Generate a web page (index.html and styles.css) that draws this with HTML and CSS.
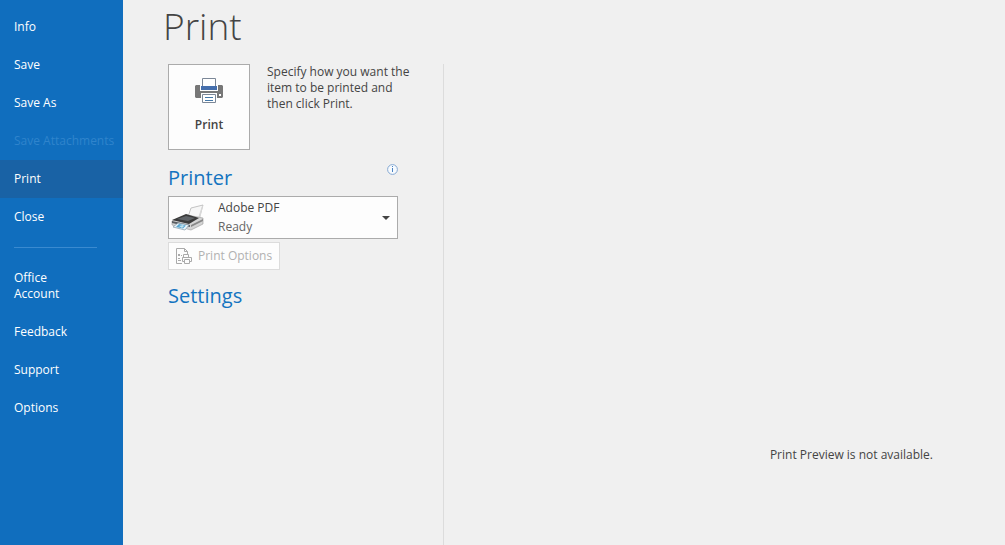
FILE: index.html
```
<!DOCTYPE html>
<html lang="en">
<head>
    <meta charset="UTF-8">
    <meta name="viewport" content="width=device-width, initial-scale=1.0">
    <title>Print</title>
    <link rel="stylesheet" href="styles.css">
</head>
<body>
    <nav class="sidebar">
        <a class="nav-item" href="#info">Info</a>
        <a class="nav-item" href="#save">Save</a>
        <a class="nav-item" href="#save-as">Save As</a>
        <a class="nav-item disabled" aria-disabled="true">Save Attachments</a>
        <a class="nav-item active" href="#print" aria-current="page">Print</a>
        <a class="nav-item" href="#close">Close</a>
        <hr class="nav-divider">
        <a class="nav-item" href="#account">Office<br>Account</a>
        <a class="nav-item" href="#feedback">Feedback</a>
        <a class="nav-item" href="#support">Support</a>
        <a class="nav-item" href="#options">Options</a>
    </nav>

    <main class="content">
        <h1>Print</h1>
        <div class="columns">
            <section class="settings">
                <div class="print-row">
                    <button class="print-button" type="button">
                        <svg width="28" height="26" viewBox="0 0 28 26" aria-hidden="true">
                            <path fill="#777" d="M1 7h26l1 1v11l-1 1H1l-1-1V8z"/>
                            <path fill="#fdfdfd" d="M5 6h18v7H5zM6 15h16v5H6z"/>
                            <path fill="#fff" stroke="#7b8797" d="M7.5 8V.5h13V8"/>
                            <path fill="#456fad" d="M6 8h16v4H6z"/>
                            <path fill="#fff" stroke="#7b8797" d="M7.5 16.500h13v8h-13z"/>
                            <path fill="#4478a8" d="M10 19h8v1h-8zM10 22h8v1h-8z"/>
                            <path fill="#fff" d="M24 16h2v2h-2z"/>
                        </svg>
                        Print
                    </button>
                    <p class="hint">Specify how you want the item to be printed and then click Print.</p>
                </div>

                <div class="section-head">
                    <h2><label for="printer">Printer</label></h2>
                    <svg class="info" width="11" height="11" viewBox="0 0 11 11" role="img" aria-label="Printer information">
                        <circle cx="5.5" cy="5.5" r="4.9" fill="#f7fafd" stroke="#86a9d3"/>
                        <path fill="#4a83c4" d="M5 2h1v1H5zM5 4h1v4H5z"/>
                    </svg>
                </div>
                <div class="printer-picker">
                    <select id="printer">
                        <option>Adobe PDF</option>
                    </select>
                    <svg class="printer-icon" width="34" height="28" viewBox="0 0 34 28" aria-hidden="true">
                        <path fill="#f7f7f7" stroke="#c4c4c4" d="M17 13 20 4l12-3-4 14z"/>
                        <path fill="#d8d8d8" d="m27 14 4-12 1 0-3 13z"/>
                        <path fill="#d4d4d4" stroke="#999" stroke-width=".6" d="m1 17 15-6 16 3v6l-12 6-19-5z"/>
                        <path fill="#3a3a3a" d="m1 16 14-6 13 4-10 6z"/>
                        <path fill="#606468" d="m6 15 9-3 9 2-7 3z"/>
                        <path fill="#888" d="m20 21 12-6v2l-12 6z"/>
                        <path fill="#5a5e62" d="m1 17 18 4v2L1 19z"/>
                        <path fill="#e9f4fa" stroke="#8197a5" stroke-width=".7" d="m7 19 11 2-4 5-12-3z"/>
                        <path fill="#58a5ce" d="m8 20 7 1.500-3 3-7-1.500z"/>
                        <path fill="#bde0ee" d="m8 22 4-1 1 1-2 2z"/>
                    </svg>
                    <span class="status">Ready</span>
                    <svg class="arrow" width="8" height="4" viewBox="0 0 8 4" aria-hidden="true">
                        <path fill="#444" d="M0 0h8L4 4z"/>
                    </svg>
                </div>
                <button class="options-button" type="button" disabled>
                    <svg width="16" height="16" viewBox="0 0 16 16" fill="none" stroke="#aaa" aria-hidden="true">
                        <path d="M6 15.500H.5V.5h8l3 3V6M8.500.5v3h3"/>
                        <path d="M7.500 9V6.500h5V9M8 13.500H6.500v-4h9v4H14M8.500 11.500h5v4h-5z"/>
                        <path fill="#aaa" stroke="none" d="M2 6h2v2H2zM2 10h2v1H2zM2 12h3v1H2zM5 7h1v1H5z"/>
                    </svg>
                    Print Options
                </button>

                <h2>Settings</h2>
            </section>

            <section class="preview">
                <p>Print Preview is not available.</p>
            </section>
        </div>
    </main>
</body>
</html>
```
FILE: styles.css
```
* {
    box-sizing: border-box;
}

body {
    display: flex;
    min-height: 100vh;
    margin: 0;
    background-color: #f0f0f0;
    color: #444;
    font-family: "Segoe UI", "Open Sans", sans-serif;
    font-size: 12px;
    line-height: 16px;
}

h1, h2, p {
    margin: 0;
}

button, select {
    color: inherit;
    font: inherit;
}

.sidebar {
    flex: 0 0 123px;
    padding-top: 8px;
    background-color: #106ebe;
}

.nav-item {
    display: block;
    padding: 11px 0 11px 14px;
    color: #fff;
    text-decoration: none;
    white-space: nowrap;
}

.nav-item.active {
    background-color: #1962a5;
}

.nav-item.disabled {
    color: #2f84cc;
}

.nav-divider {
    height: 1px;
    margin: 11px 26px 11px 14px;
    border: 0;
    background-color: #3a8ad0;
}

.content {
    display: flex;
    flex: 1;
    flex-direction: column;
}

h1 {
    margin-bottom: 12px;
    padding-left: 40px;
    font-size: 37px;
    font-weight: 300;
    line-height: 52px;
}

h2 {
    color: #1474c0;
    font-size: 20px;
    font-weight: 400;
    line-height: 28px;
}

.columns {
    display: flex;
    flex: 1;
}

.settings {
    flex: 0 0 320px;
    padding: 0 45px;
}

.print-row {
    display: flex;
    gap: 17px;
    margin-bottom: 14px;
}

.print-button {
    display: flex;
    flex: 0 0 82px;
    flex-direction: column;
    align-items: center;
    gap: 13px;
    height: 86px;
    padding: 13px 0 0;
    border: 1px solid #ababab;
    background-color: #fdfdfd;
    font-weight: 600;
}

.hint {
    margin-right: -20px;
}

.section-head {
    display: flex;
    justify-content: space-between;
    margin-bottom: 4px;
}

/* icon, name and status share one box, the select fills all of it */
.printer-picker {
    display: grid;
    grid-template-columns: 49px 1fr 20px;
    grid-template-rows: 23px 20px;
    height: 43px;
}

.printer-picker select {
    grid-area: 1 / 1 / 3 / 4;
    appearance: none;
    padding: 0 20px 20px 49px;
    border: 1px solid #ababab;
    border-radius: 0;
    background-color: #fdfdfd;
}

.printer-icon, .status, .arrow {
    z-index: 1;
    pointer-events: none;
}

.printer-icon {
    grid-area: 1 / 1 / 3 / 2;
    align-self: center;
    margin-left: 3px;
}

.status {
    grid-area: 2 / 2;
    padding-left: 1px;
    color: #666;
}

.arrow {
    grid-area: 1 / 3 / 3 / 4;
    align-self: center;
    margin-left: 4px;
}

.options-button {
    display: flex;
    align-items: center;
    gap: 6px;
    height: 28px;
    margin: 3px 0 12px;
    padding: 0 7px;
    border: 1px solid #dcdcdc;
    background-color: #fdfdfd;
    color: #b1b1b1;
}

.preview {
    display: flex;
    flex: 1;
    align-items: flex-end;
    justify-content: flex-end;
    padding: 0 72px 82px;
    border-left: 1px solid #dcdcdc;
}
```
